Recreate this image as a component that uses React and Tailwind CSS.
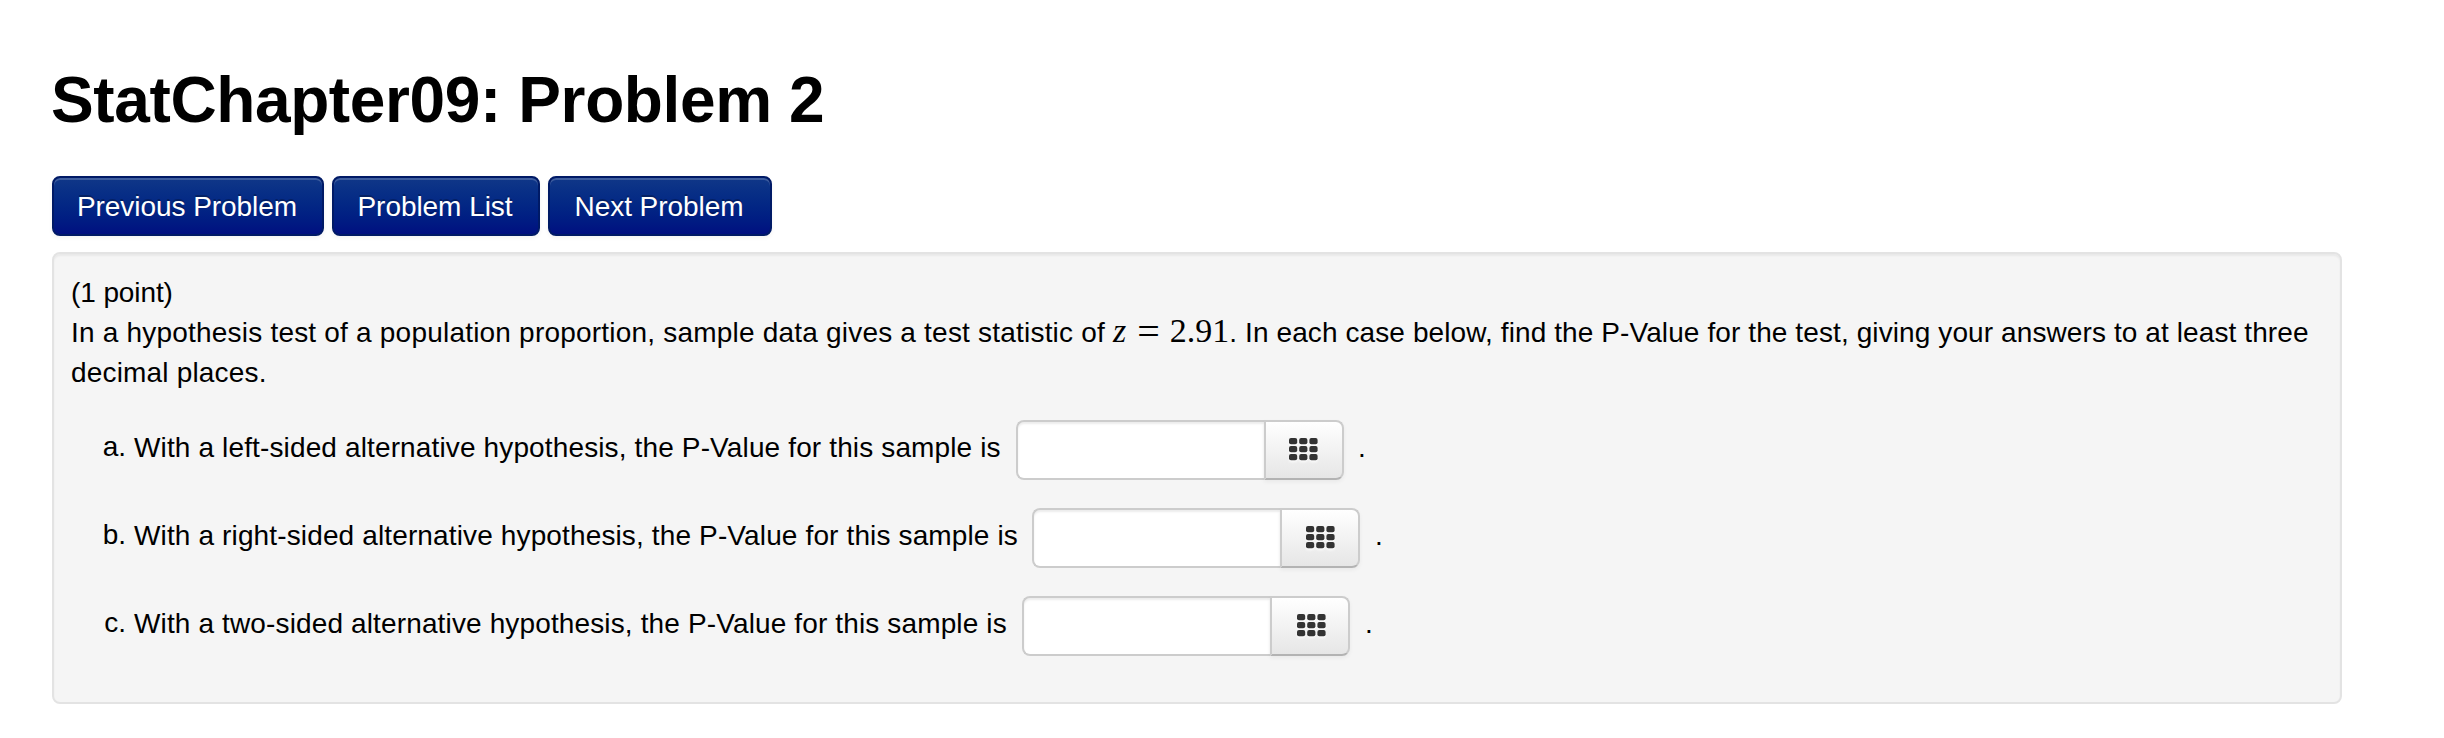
const navButtons = [
  { label: 'Previous Problem', width: 'w-[272px]' },
  { label: 'Problem List', width: 'w-[208px]' },
  { label: 'Next Problem', width: 'w-[224px]' },
]

const questions = [
  { marker: 'a.', side: 'left-sided', width: 'w-[882px]', icon: 'pl-[23px]', dot: 'ml-[14px]' },
  { marker: 'b.', side: 'right-sided', width: 'w-[898px]', icon: 'pl-[24px]', dot: 'ml-[15px]' },
  { marker: 'c.', side: 'two-sided', width: 'w-[888px]', icon: 'pl-[25px]', dot: 'ml-[15px]' },
]

const GridIcon = () => (
  <svg width="29" height="23" viewBox="0 0 29 23" fill="#333333" className="drop-shadow-[0_2px_1px_rgba(255,255,255,0.75)]">
    {[0, 8, 16].map((y) =>
      [0, 10.2, 20.4].map((x) => (
        <rect key={`${x}-${y}`} x={x} y={y} width="8.2" height="6.2" rx="2" />
      ))
    )}
  </svg>
)

const NavButton = ({ label, width }) => (
  <button
    className={`${width} h-[60px] rounded-[8px] border-2 border-[#001a66] bg-linear-to-b from-[#113888] to-[#000c80] bg-origin-border text-white whitespace-nowrap leading-[40px] pt-px pr-[2px] tracking-[-0.05px] [text-shadow:0_-2px_0_rgba(0,0,0,0.25)] shadow-[inset_0_2px_0_rgba(255,255,255,0.2),0_2px_4px_rgba(0,0,0,0.05)]`}
  >
    {label}
  </button>
)

const AnswerField = ({ label, icon }) => (
  <div className="flex w-[328px] h-[60px]">
    <input
      type="text"
      aria-label={label}
      className="w-[248px] h-[60px] px-3 rounded-l-[8px] border-2 border-r-0 border-[#cccccc] bg-white outline-none shadow-[inset_0_2px_2px_rgba(0,0,0,0.075)]"
    />
    <button
      aria-label="Open equation editor"
      className={`w-[80px] h-[60px] ${icon} pt-[16px] flex items-start rounded-r-[8px] border-2 border-[#cccccc] border-b-[#b3b3b3] bg-linear-to-b from-white to-[#e6e6e6] shadow-[inset_0_2px_0_rgba(255,255,255,0.2),0_2px_4px_rgba(0,0,0,0.05)]`}
    >
      <GridIcon />
    </button>
  </div>
)

const App = () => {
  return (
    <div className="min-h-screen bg-white pl-[52px] pr-[102px] pt-[60px] text-black text-[28px] leading-[40px] font-['Liberation_Sans',Arial,sans-serif]">
      <h1 className="-ml-px h-[80px] text-[64px] leading-[80px] font-bold whitespace-nowrap tracking-[-0.38px]">StatChapter09: Problem 2</h1>

      <div className="mt-[36px] flex gap-2">
        {navButtons.map((button) => (
          <NavButton key={button.label} {...button} />
        ))}
      </div>

      <div className="mt-4 h-[452px] px-[17px] pt-[19px] rounded-[8px] border-2 border-[#e3e3e3] bg-[#f5f5f5] shadow-[inset_0_2px_2px_rgba(0,0,0,0.05)]">
        <p className="tracking-[-0.1px]">(1 point)</p>
        <p className="h-[40px] whitespace-nowrap">
          <span className="tracking-[0.205px]">
            In a hypothesis test of a population proportion, sample data gives a test statistic of{' '}
          </span>
          <span className="font-['Liberation_Serif',serif] text-[34px] leading-[30px]">
            <i>z</i>
            <span className="relative top-[3px] ml-[11px] mr-[10px] text-[40px] leading-[20px]">=</span>
            2.91
          </span>
          <span className="tracking-[0.1px]">
            . In each case below, find the P-Value for the test, giving your answers to at least three
          </span>
        </p>
        <p className="tracking-[0.18px]">decimal places.</p>

        <ol className="mt-[27px] ml-px flex flex-col gap-[28px]">
          {questions.map((q) => (
            <li key={q.marker} className="flex h-[60px]">
              <span className="w-[54px] pt-[7px] text-right">{q.marker}</span>
              <span className={`${q.width} pl-[8px] pt-[8px] whitespace-nowrap tracking-[0.135px]`}>
                With a {q.side} alternative hypothesis, the P-Value for this sample is
              </span>
              <div className="ml-[8px]">
                <AnswerField label={`Answer ${q.marker}`} icon={q.icon} />
              </div>
              <span className={`${q.dot} pt-[8px]`}>.</span>
            </li>
          ))}
        </ol>
      </div>
    </div>
  )
}

export default App
